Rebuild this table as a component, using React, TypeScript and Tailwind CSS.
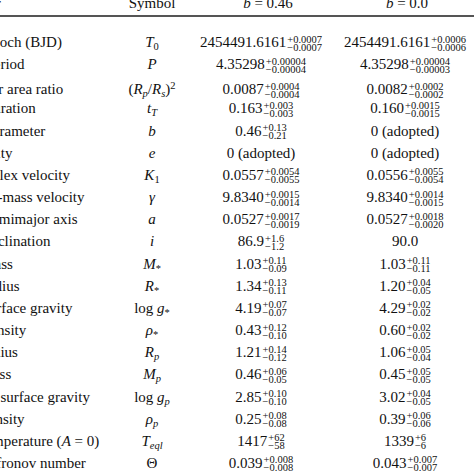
import React from "react";

type Val = { m: string; p?: string; n?: string };

const Sub = ({ children, italic = false }: { children: React.ReactNode; italic?: boolean }) => (
  <span className={`text-[10.5px] align-[-3px] ${italic ? "italic" : "not-italic"}`}>{children}</span>
);

const I = ({ children }: { children: React.ReactNode }) => <span className="italic">{children}</span>;

const Num = ({ v }: { v: Val }) => (
  <span className="whitespace-nowrap">
    <span>{v.m}</span>
    {v.p && (
      <span className="inline-block align-[-3.5px] text-[10.5px] leading-[8px] ml-[1px] text-left">
        <span className="block">{v.p}</span>
        <span className="block">{v.n}</span>
      </span>
    )}
  </span>
);

const rows: { label: React.ReactNode; sym: React.ReactNode; a: Val; b: Val }[] = [
  { label: "Transit epoch (BJD)", sym: <><I>T</I><Sub>0</Sub></>, a: { m: "2454491.6161", p: "+0.0007", n: "−0.0007" }, b: { m: "2454491.6161", p: "+0.0006", n: "−0.0006" } },
  { label: "Orbital period", sym: <I>P</I>, a: { m: "4.35298", p: "+0.00004", n: "−0.00004" }, b: { m: "4.35298", p: "+0.00004", n: "−0.00003" } },
  { label: "Planet/star area ratio", sym: <>(<I>R</I><Sub italic>p</Sub>/<I>R</I><Sub italic>s</Sub>)<span className="text-[10.5px] align-[5px]">2</span></>, a: { m: "0.0087", p: "+0.0004", n: "−0.0004" }, b: { m: "0.0082", p: "+0.0002", n: "−0.0002" } },
  { label: "Transit duration", sym: <><I>t</I><Sub italic>T</Sub></>, a: { m: "0.163", p: "+0.003", n: "−0.003" }, b: { m: "0.160", p: "+0.0015", n: "−0.0015" } },
  { label: "Impact parameter", sym: <I>b</I>, a: { m: "0.46", p: "+0.13", n: "−0.21" }, b: { m: "0 (adopted)" } },
  { label: "Eccentricity", sym: <I>e</I>, a: { m: "0 (adopted)" }, b: { m: "0 (adopted)" } },
  { label: "Stellar reflex velocity", sym: <><I>K</I><Sub>1</Sub></>, a: { m: "0.0557", p: "+0.0054", n: "−0.0055" }, b: { m: "0.0556", p: "+0.0055", n: "−0.0054" } },
  { label: "Centre-of-mass velocity", sym: <I>γ</I>, a: { m: "9.8340", p: "+0.0015", n: "−0.0014" }, b: { m: "9.8340", p: "+0.0014", n: "−0.0015" } },
  { label: "Orbital semimajor axis", sym: <I>a</I>, a: { m: "0.0527", p: "+0.0017", n: "−0.0019" }, b: { m: "0.0527", p: "+0.0018", n: "−0.0020" } },
  { label: "Orbital inclination", sym: <I>i</I>, a: { m: "86.9", p: "+1.6", n: "−1.2" }, b: { m: "90.0" } },
  { label: "Stellar mass", sym: <><I>M</I><Sub>*</Sub></>, a: { m: "1.03", p: "+0.11", n: "−0.09" }, b: { m: "1.03", p: "+0.11", n: "−0.11" } },
  { label: "Stellar radius", sym: <><I>R</I><Sub>*</Sub></>, a: { m: "1.34", p: "+0.13", n: "−0.11" }, b: { m: "1.20", p: "+0.04", n: "−0.05" } },
  { label: "Stellar surface gravity", sym: <>log <I>g</I><Sub>*</Sub></>, a: { m: "4.19", p: "+0.07", n: "−0.07" }, b: { m: "4.29", p: "+0.02", n: "−0.02" } },
  { label: "Stellar density", sym: <><I>ρ</I><Sub>*</Sub></>, a: { m: "0.43", p: "+0.12", n: "−0.10" }, b: { m: "0.60", p: "+0.02", n: "−0.02" } },
  { label: "Planet radius", sym: <><I>R</I><Sub italic>p</Sub></>, a: { m: "1.21", p: "+0.14", n: "−0.12" }, b: { m: "1.06", p: "+0.05", n: "−0.04" } },
  { label: "Planet mass", sym: <><I>M</I><Sub italic>p</Sub></>, a: { m: "0.46", p: "+0.06", n: "−0.05" }, b: { m: "0.45", p: "+0.05", n: "−0.05" } },
  { label: "Planetary surface gravity", sym: <>log <I>g</I><Sub italic>p</Sub></>, a: { m: "2.85", p: "+0.10", n: "−0.10" }, b: { m: "3.02", p: "+0.04", n: "−0.05" } },
  { label: "Planet density", sym: <><I>ρ</I><Sub italic>p</Sub></>, a: { m: "0.25", p: "+0.08", n: "−0.08" }, b: { m: "0.39", p: "+0.06", n: "−0.06" } },
  { label: <>Planet temperature (<I>A</I> = 0)</>, sym: <><I>T</I><Sub italic>eql</Sub></>, a: { m: "1417", p: "+62", n: "−58" }, b: { m: "1339", p: "+6", n: "−6" } },
  { label: "Planet Safronov number", sym: <>Θ</>, a: { m: "0.039", p: "+0.008", n: "−0.008" }, b: { m: "0.043", p: "+0.007", n: "−0.007" } },
];

export default function App() {
  return (
    <div className="w-[474px] h-[474px] overflow-hidden bg-white text-[#111] font-['Liberation_Serif',serif] text-[15px]">
      <div className="w-[534px] ml-[-60px]">
        <div className="flex h-[22px] leading-[22px] mt-[-8px]">
          <div className="w-[178px]">Parameter</div>
          <div className="w-[68px] text-center">Symbol</div>
          <div className="w-[150px] text-center pl-[14px]"><I>b</I> = 0.46</div>
          <div className="w-[138px] text-center pl-[4px]"><I>b</I> = 0.0</div>
        </div>
        <div className="mt-[1px] h-[2px] bg-[#555]" />
        <div className="mt-[14px] flex flex-col">
          {rows.map((r, i) => (
            <div key={i} className="flex items-baseline h-[22.16px] leading-[22px]">
              <div className="w-[178px] whitespace-nowrap">{r.label}</div>
              <div className="w-[68px] text-center whitespace-nowrap">{r.sym}</div>
              <div className="w-[150px] text-center"><Num v={r.a} /></div>
              <div className="w-[138px] text-center"><Num v={r.b} /></div>
            </div>
          ))}
        </div>
      </div>
    </div>
  );
}
